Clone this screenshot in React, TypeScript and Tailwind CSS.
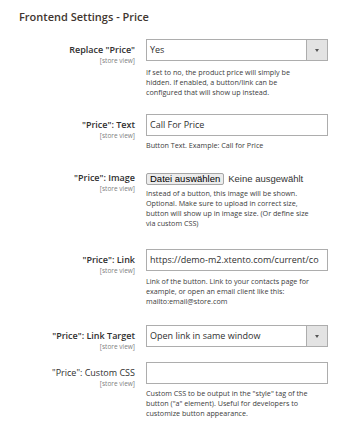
import React from 'react';

type LabelProps = { title: string; bold?: boolean; tight?: boolean };

const Label = ({ title, bold = true, tight = false }: LabelProps) => (
  <div className={tight ? 'w-[135px] shrink-0 text-right pt-[2px]' : 'w-[135px] shrink-0 text-right pt-[6px]'}>
    <div
      className={
        bold
          ? 'text-[9px] leading-[10px] text-[#303030] font-semibold'
          : 'text-[9px] leading-[10px] text-[#303030] font-normal'
      }
    >
      {title}
    </div>
    <div className={tight ? 'text-[6.5px] leading-[8px] mt-[2px] text-[#808080]' : 'text-[6.5px] leading-[8px] mt-[2px] text-[#808080]'}>
      [store view]
    </div>
  </div>
);

const Help = ({ lines, className }: { lines: string[]; className: string }) => (
  <div className={className}>
    {lines.map((l, i) => (
      <div key={i} className="whitespace-nowrap">{l}</div>
    ))}
  </div>
);

const helpCls = 'text-[7.2px] leading-[10px] text-[#3d3d3d]';

const Select = ({ value }: { value: string }) => (
  <div className="flex h-[22px] border border-[#adadad] bg-white">
    <div className="flex-1 px-[3px] text-[9px] leading-[20px] text-[#303030]">{value}</div>
    <div className="w-[21px] border-l border-[#adadad] bg-[#e3e3e3] flex items-center justify-center">
      <div className="w-0 h-0 border-l-[2.5px] border-r-[2.5px] border-t-[3px] border-l-transparent border-r-transparent border-t-[#555]" />
    </div>
  </div>
);

const Input = ({ value }: { value: string }) => (
  <div className="h-[22px] border border-[#adadad] bg-white px-[3px] text-[9px] leading-[20px] text-[#303030] overflow-hidden whitespace-nowrap">
    {value}
  </div>
);

const App = () => {
  return (
    <div className="w-[353px] h-[427px] bg-white font-['Open_Sans',sans-serif] overflow-hidden">
      <div className="pt-[10px] pl-[19px] text-[11px] leading-[14px] font-semibold text-[#41362f]">
        Frontend Settings - Price
      </div>

      {/* Replace price */}
      <div className="flex mt-[15px]">
        <Label title={'Replace "Price"'} />
        <div className="ml-[11px] w-[182px]">
          <Select value="Yes" />
          <Help
            className={`mt-[6px] ${helpCls}`}
            lines={[
              'If set to no, the product price will simply be',
              'hidden. If enabled, a button/link can be',
              'configured that will show up instead.',
            ]}
          />
        </div>
      </div>

      {/* Text */}
      <div className="flex mt-[17px]">
        <Label title={'"Price": Text'} />
        <div className="ml-[11px] w-[182px]">
          <Input value="Call For Price" />
          <Help className={`mt-[4px] ${helpCls}`} lines={['Button Text. Example: Call for Price']} />
        </div>
      </div>

      {/* Image */}
      <div className="flex mt-[21px]">
        <Label title={'"Price": Image'} tight />
        <div className="ml-[11px] w-[182px]">
          <div className="h-[16px] flex items-center gap-[4px] font-['Liberation_Sans',Arial,sans-serif] text-[9.5px]">
            <div className="h-[12px] px-[3px] leading-[10px] bg-[#ececec] border border-[#a6a6a6] rounded-[2px] text-black">
              Datei auswählen
            </div>
            <span className="text-[#333]">Keine ausgewählt</span>
          </div>
          <Help
            className={`mt-[1px] ${helpCls}`}
            lines={[
              'Instead of a button, this image will be shown.',
              'Optional. Make sure to upload in correct size,',
              'button will show up in image size. (Or define size',
              'via custom CSS)',
            ]}
          />
        </div>
      </div>

      {/* Link */}
      <div className="flex mt-[21px]">
        <Label title={'"Price": Link'} />
        <div className="ml-[11px] w-[182px]">
          <Input value="https://demo-m2.xtento.com/current/co" />
          <Help
            className={`mt-[5px] ${helpCls}`}
            lines={[
              'Link of the button. Link to your contacts page for',
              'example, or open an email client like this:',
              'mailto:email@store.com',
            ]}
          />
        </div>
      </div>

      {/* Link target */}
      <div className="flex mt-[19px]">
        <Label title={'"Price": Link Target'} />
        <div className="ml-[11px] w-[182px]">
          <Select value="Open link in same window" />
        </div>
      </div>

      {/* Custom CSS */}
      <div className="flex mt-[11px]">
        <Label title={'"Price": Custom CSS'} bold={false} />
        <div className="ml-[11px] w-[182px]">
          <Input value="" />
          <Help
            className={`mt-[4px] ${helpCls}`}
            lines={[
              'Custom CSS to be output in the "style" tag of the',
              'button ("a" element). Useful for developers to',
              'customize button appearance.',
            ]}
          />
        </div>
      </div>
    </div>
  );
};

export default App;
